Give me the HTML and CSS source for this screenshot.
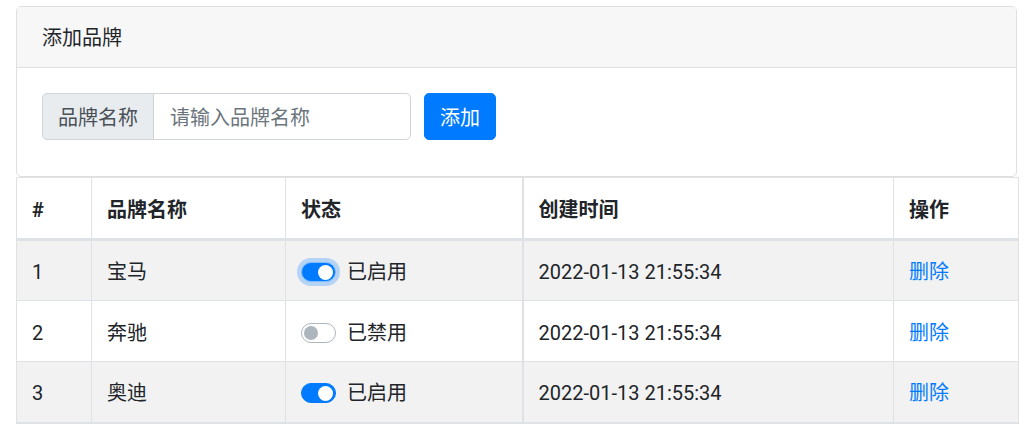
FILE: index.html
```html
<!DOCTYPE html>
<html lang="zh-CN">
<head>
<meta charset="utf-8">
<title>品牌管理</title>
<link rel="stylesheet" href="styles.css">
</head>
<body>
<div class="page">
  <div class="card">
    <div class="card-header">添加品牌</div>
    <div class="card-body">
      <form class="add-form">
        <div class="input-group">
          <span class="input-group-text">品牌名称</span>
          <input class="form-control" type="text" placeholder="请输入品牌名称">
        </div>
        <button type="button" class="btn-primary">添加</button>
      </form>
    </div>
  </div>
  <table class="table">
    <colgroup>
      <col class="c-id"><col class="c-name"><col class="c-status"><col class="c-time"><col class="c-op">
    </colgroup>
    <thead>
      <tr><th>#</th><th>品牌名称</th><th>状态</th><th class="time-col">创建时间</th><th>操作</th></tr>
    </thead>
    <tbody>
      <tr class="odd">
        <td>1</td><td>宝马</td>
        <td><label class="switch"><span class="track on focus"><span class="knob"></span></span><span class="switch-label">已启用</span></label></td>
        <td class="time-col">2022-01-13 21:55:34</td>
        <td><a href="#" class="link">删除</a></td>
      </tr>
      <tr>
        <td>2</td><td>奔驰</td>
        <td><label class="switch"><span class="track off"><span class="knob"></span></span><span class="switch-label">已禁用</span></label></td>
        <td class="time-col">2022-01-13 21:55:34</td>
        <td><a href="#" class="link">删除</a></td>
      </tr>
      <tr class="odd">
        <td>3</td><td>奥迪</td>
        <td><label class="switch"><span class="track on"><span class="knob"></span></span><span class="switch-label">已启用</span></label></td>
        <td class="time-col">2022-01-13 21:55:34</td>
        <td><a href="#" class="link">删除</a></td>
      </tr>
    </tbody>
  </table>
</div>
</body>
</html>
```

FILE: styles.css
```css
* { box-sizing: border-box; }
html, body { margin: 0; padding: 0; background: #fff; }
body {
  font-family: "Segoe UI", Roboto, "Noto Sans CJK SC", sans-serif;
  font-size: 20px;
  line-height: 30px;
  color: #212529;
}
.page {
  padding: 6px 13px 0 16px;
}
.card {
  width: 1001px;
  border: 1px solid #dfdfdf;
  border-radius: 5px;
  background: #fff;
}
.card-header {
  background: #f7f7f7;
  height: 61px;
  display: flex;
  align-items: center;
  padding: 2px 25px 0;
  border-bottom: 1px solid #dfdfdf;
  border-radius: 4px 4px 0 0;
}
.card-body {
  padding: 25px 25px 36px;
}
.add-form {
  display: flex;
  align-items: center;
  gap: 13px;
  margin: 0;
}
.input-group {
  display: flex;
  width: 369px;
  height: 47px;
}
.input-group-text {
  display: flex;
  align-items: center;
  padding: 2px 15px 0;
  background: #e9ecef;
  border: 1px solid #ced4da;
  border-radius: 5px 0 0 5px;
  color: #495057;
  white-space: nowrap;
}
.form-control {
  flex: 1;
  min-width: 0;
  height: 47px;
  margin: 0 0 0 -1px;
  padding: 2px 16px 0;
  border: 1px solid #ced4da;
  border-radius: 0 5px 5px 0;
  font: inherit;
  color: #495057;
  background: #fff;
  outline: none;
}
.form-control::placeholder { color: #6c757d; opacity: 1; }
.btn-primary {
  height: 47px;
  padding: 2px 15px 0;
  border: 1px solid #007bff;
  border-radius: 5px;
  background: #007bff;
  color: #fff;
  font: inherit;
  cursor: pointer;
}
.table {
  width: 1002px;
  border-collapse: collapse;
  table-layout: fixed;
  border: 1px solid #dee2e6;
  border-bottom: 2px solid #dee2e6;
}
.c-id { width: 75px; }
.c-name { width: 194px; }
.c-status { width: 237px; }
.c-time { width: 371px; }
.c-op { width: 125px; }
.table th, .table td {
  padding: 3px 15px 0;
  border: 1px solid #dee2e6;
  text-align: left;
  vertical-align: middle;
  height: 61px;
  line-height: 30px;
}
.table th {
  font-weight: 700;
  height: 62px;
}
.table thead th {
  border-bottom: 3px solid #dee2e6;
}
.table th.time-col, .table td.time-col {
  border-left: 2px solid #dee2e6;
}
.table tr.odd td { background: #f2f2f2; }
.switch {
  display: flex;
  align-items: center;
  gap: 11px;
  height: 30px;
  cursor: pointer;
}
.track {
  position: relative;
  display: block;
  flex: none;
  width: 35px;
  height: 20px;
  border-radius: 10px;
  border: 1px solid #adb5bd;
  background: #fff;
}
.track .knob {
  position: absolute;
  top: 2px;
  left: 2px;
  width: 14px;
  height: 14px;
  border-radius: 50%;
  background: #adb5bd;
}
.track.on {
  background: #007bff;
  border-color: #007bff;
}
.track.on .knob {
  left: auto;
  right: 2px;
  background: #fff;
  width: 15px;
  height: 15px;
  top: 1.5px;
}
.track.focus {
  box-shadow: 0 0 0 4px rgba(0, 123, 255, 0.25);
  border-color: #80bdff;
}
.link {
  color: #007bff;
  text-decoration: none;
}
```
